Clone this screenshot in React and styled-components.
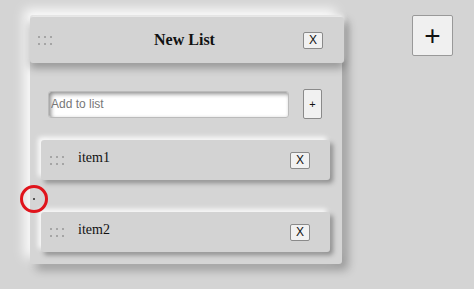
import React from 'react';
import styled, { createGlobalStyle } from 'styled-components';

const Global = createGlobalStyle`
	body {
		margin: 0;
		background: #d4d4d4;
		font-family: 'Liberation Serif', 'Times New Roman', serif;
	}
`;

const Page = styled.div`
	position: relative;
	width: 474px;
	height: 289px;
	overflow: hidden;
	display: flex;
	align-items: flex-start;
	padding: 15px 0 0 30px;
	box-sizing: border-box;
`;

const Panel = styled.div`
	width: 312px;
	height: 249px;
	background: #d5d5d5;
	border-radius: 3px;
	box-shadow: -6px -6px 12px rgba(255, 255, 255, 0.9), 6px 6px 10px rgba(0, 0, 0, 0.28);
	display: flex;
	flex-direction: column;
`;

const Header = styled.div`
	height: 46px;
	margin-right: -2px;
	margin-top: 2px;
	display: flex;
	align-items: center;
	padding: 0 21px 0 8px;
	background: #d3d3d3;
	border-radius: 3px;
	box-shadow: 0 5px 8px rgba(0, 0, 0, 0.3), 0 -2px 4px rgba(255, 255, 255, 0.8);
`;

const Title = styled.h1`
	flex: 1;
	margin: 0;
	text-align: center;
	font-size: 16px;
	font-weight: bold;
	color: #111;
	padding-left: 14px;
`;

const Dots = styled.div`
	display: grid;
	grid-template-columns: repeat(3, 2px);
	gap: 5px 4px;
	width: 14px;
	span {
		width: 2px;
		height: 2px;
		background: #a5a5a5;
	}
`;

const SmallButton = styled.button`
	width: 20px;
	height: 17px;
	padding: 0;
	font-family: 'Liberation Sans', Arial, sans-serif;
	font-size: 12px;
	color: #111;
	background: #f1f1f1;
	border: 1px solid #8a8a8a;
	border-radius: 2px;
	line-height: 15px;
`;

const Body = styled.div`
	display: flex;
	flex-direction: column;
	padding: 26px 12px 0 11px;
`;

const AddRow = styled.div`
	display: flex;
	align-items: center;
	gap: 14px;
	padding: 0 8px 0 7px;
	margin-bottom: 21px;
`;

const Input = styled.input`
	width: 243px;
	height: 27px;
	box-sizing: border-box;
	border: 1px solid #bbb;
	border-radius: 3px;
	background: #fff;
	box-shadow: inset 2px 2px 4px rgba(0, 0, 0, 0.45);
	padding: 0 2px;
	font-family: 'Liberation Sans', Arial, sans-serif;
	font-size: 12px;
	&::placeholder {
		color: #777;
	}
`;

const PlusButton = styled(SmallButton)`
	width: 19px;
	height: 30px;
	font-size: 11px;
`;

const Item = styled.div`
	height: 40px;
	display: flex;
	align-items: center;
	padding: 0 20px 0 9px;
	margin-bottom: ${(p) => p.gap || 0}px;
	background: #d3d3d3;
	border-radius: 3px;
	box-shadow: -3px -3px 5px rgba(255, 255, 255, 0.9), 3px 3px 5px rgba(0, 0, 0, 0.35);
`;

const ItemText = styled.span`
	flex: 1;
	margin-left: 14px;
	font-size: 14px;
	color: #111;
	padding-bottom: 4px;
`;

const NewButton = styled.button`
	margin-left: 70px;
	width: 41px;
	height: 41px;
	padding: 0;
	background: #f0f0f0;
	border: 1px solid #999;
	border-radius: 2px;
	font-family: 'Liberation Sans', Arial, sans-serif;
	font-size: 28px;
	line-height: 36px;
	color: #111;
`;

const Marker = styled.div`
	position: absolute;
	left: 20px;
	top: 185px;
	width: 22px;
	height: 22px;
	border: 3px solid #e0141c;
	border-radius: 50%;
	display: flex;
	align-items: center;
	justify-content: center;
	&::after {
		content: '';
		width: 2px;
		height: 2px;
		background: #555;
	}
`;

const Grip = () => (
	<Dots>
		{Array.from({ length: 6 }).map((_, i) => (
			<span key={i} />
		))}
	</Dots>
);

const App = () => {
	return (
		<Page>
			<Global />
			<Panel>
				<Header>
					<Grip />
					<Title>New List</Title>
					<SmallButton>X</SmallButton>
				</Header>
				<Body>
					<AddRow>
						<Input placeholder="Add to list" />
						<PlusButton>+</PlusButton>
					</AddRow>
					<Item gap={32}>
						<Grip />
						<ItemText>item1</ItemText>
						<SmallButton>X</SmallButton>
					</Item>
					<Item>
						<Grip />
						<ItemText>item2</ItemText>
						<SmallButton>X</SmallButton>
					</Item>
				</Body>
			</Panel>
			<NewButton>+</NewButton>
			<Marker />
		</Page>
	);
};

export default App;
